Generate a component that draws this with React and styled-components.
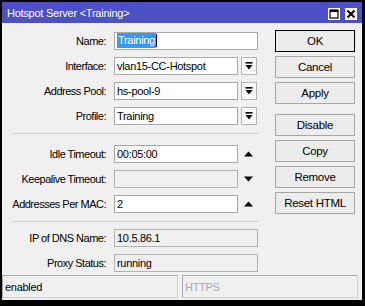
import React from 'react';
import styled, { createGlobalStyle } from 'styled-components';

const Global = createGlobalStyle`
  html, body { margin: 0; padding: 0; background: #000; }
  body { font-family: "Liberation Sans", Arial, sans-serif; }
  * { box-sizing: border-box; }
`;

const Frame = styled.div`
  width: 365px;
  height: 306px;
  background: #000;
  padding: 2px 3px 6px 2px;
`;

const Window = styled.div`
  height: 100%;
  background: #f0f0f0;
  display: flex;
  flex-direction: column;
`;

const TitleBar = styled.div`
  height: 21px;
  flex: none;
  background: #4b50c5;
  display: flex;
  align-items: center;
  padding: 0 5px 0 5px;
  color: #fff;
  font-size: 11px;
  letter-spacing: -0.25px;
`;

const Title = styled.div`
  flex: 1;
  padding-top: 1px;
`;

const TitleButtons = styled.div`
  display: flex;
  gap: 5px;
  margin-top: 3px;
`;

const TitleButton = styled.div`
  width: 12px;
  height: 12px;
  background: #fff;
  display: flex;
  align-items: center;
  justify-content: center;
`;

const Body = styled.div`
  flex: 1;
  display: flex;
  padding-top: 5px;
`;

const Form = styled.div`
  width: 256px;
  display: flex;
  flex-direction: column;
`;

const Row = styled.div`
  height: 25px;
  display: grid;
  grid-template-columns: 104px 1fr;
  column-gap: 8px;
  align-items: center;
`;

const Label = styled.div`
  text-align: right;
  font-size: 11px;
  letter-spacing: -0.5px;
  color: #000;
  white-space: nowrap;
`;

const Field = styled.div`
  display: flex;
  align-items: center;
  height: 18px;
`;

const Input = styled.div`
  height: 18px;
  width: ${p => (p.$short ? '124px' : '144px')};
  border: 1px solid ${p => (p.$readonly ? '#b2b2b2' : '#a9a9a9')};
  background: ${p => (p.$readonly ? '#f0f0f0' : '#fff')};
  font-size: 11px;
  letter-spacing: -0.3px;
  padding-left: 2px;
  display: flex;
  align-items: center;
  color: #000;
  white-space: nowrap;
  overflow: hidden;
`;

const Selected = styled.span`
  background: #3399ff;
  color: #fff;
  padding: 1px 1px 2px 1px;
`;

const Caret = styled.span`
  display: inline-block;
  width: 1px;
  height: 13px;
  background: #000;
`;

const DropButton = styled.div`
  width: 16px;
  height: 18px;
  margin-left: 3px;
  border: 1px solid #b4b4b4;
  background: #fbfbfb;
  display: flex;
  align-items: center;
  justify-content: center;
`;

const Spin = styled.div`
  width: 20px;
  height: 18px;
  display: flex;
  align-items: center;
  justify-content: center;
`;

const Separator = styled.div`
  height: ${p => p.$h}px;
  padding-top: ${p => p.$top}px;
  padding-left: 10px;
`;

const Line = styled.div`
  height: 1px;
  background: #d2d2d2;
`;

const Buttons = styled.div`
  margin-left: 17px;
  padding-top: 2px;
  width: 80px;
  display: flex;
  flex-direction: column;
  gap: 4px;
`;

const Button = styled.div`
  height: 22px;
  border: 1px solid ${p => (p.$default ? '#000' : '#a6a6a6')};
  background: #ececec;
  display: flex;
  align-items: center;
  justify-content: center;
  font-size: 11.5px;
  letter-spacing: -0.3px;
  color: #000;
  margin-top: ${p => (p.$gap ? '6px' : '0')};
`;

const StatusBar = styled.div`
  height: 23px;
  flex: none;
  margin-bottom: 2px;
  display: flex;
  gap: 4px;
  padding-right: 4px;
`;

const StatusCell = styled.div`
  width: ${p => (p.$grow ? 'auto' : '176px')};
  flex: ${p => (p.$grow ? '1' : 'none')};
  border: 1px solid #cfcfcf;
  border-top-color: #a8a8a8;
  border-left-color: #a8a8a8;
  display: flex;
  align-items: center;
  padding-left: 2px;
  font-size: 11px;
  letter-spacing: -0.3px;
  color: ${p => (p.$muted ? '#a9a9a9' : '#000')};
`;

const DropIcon = () => (
  <svg width="8" height="8" viewBox="0 0 8 8">
    <rect x="0.5" y="0" width="7" height="1.6" fill="#000" />
    <polygon points="0.5,3 7.5,3 4,7.5" fill="#000" />
  </svg>
);

const Tri = ({ down }) => (
  <svg width="9" height="6" viewBox="0 0 9 6">
    {down ? (
      <polygon points="0,0.5 9,0.5 4.5,5.5" fill="#000" />
    ) : (
      <polygon points="0,5.5 9,5.5 4.5,0.5" fill="#000" />
    )}
  </svg>
);

const MaxIcon = () => (
  <svg width="10" height="10" viewBox="0 0 10 10">
    <rect x="1" y="1" width="8" height="8" fill="none" stroke="#000" strokeWidth="1.2" />
    <rect x="1" y="1" width="8" height="2" fill="#000" />
  </svg>
);

const CloseIcon = () => (
  <svg width="10" height="10" viewBox="0 0 10 10">
    <path d="M1.5 1.5 L8.5 8.5 M8.5 1.5 L1.5 8.5" stroke="#000" strokeWidth="2" />
  </svg>
);

export default function App() {
  return (
    <>
      <Global />
      <Frame>
        <Window>
          <TitleBar>
            <Title>Hotspot Server &lt;Training&gt;</Title>
            <TitleButtons>
              <TitleButton><MaxIcon /></TitleButton>
              <TitleButton><CloseIcon /></TitleButton>
            </TitleButtons>
          </TitleBar>
          <Body>
            <Form>
              <Row>
                <Label>Name:</Label>
                <Field>
                  <Input><Selected>Training</Selected><Caret /></Input>
                </Field>
              </Row>
              <Row>
                <Label>Interface:</Label>
                <Field>
                  <Input $short>vlan15-CC-Hotspot</Input>
                  <DropButton><DropIcon /></DropButton>
                </Field>
              </Row>
              <Row>
                <Label>Address Pool:</Label>
                <Field>
                  <Input $short>hs-pool-9</Input>
                  <DropButton><DropIcon /></DropButton>
                </Field>
              </Row>
              <Row>
                <Label>Profile:</Label>
                <Field>
                  <Input $short>Training</Input>
                  <DropButton><DropIcon /></DropButton>
                </Field>
              </Row>
              <Separator $h={13} $top={5}><Line /></Separator>
              <Row>
                <Label>Idle Timeout:</Label>
                <Field>
                  <Input $short>00:05:00</Input>
                  <Spin><Tri /></Spin>
                </Field>
              </Row>
              <Row>
                <Label>Keepalive Timeout:</Label>
                <Field>
                  <Input $short $readonly></Input>
                  <Spin><Tri down /></Spin>
                </Field>
              </Row>
              <Row>
                <Label>Addresses Per MAC:</Label>
                <Field>
                  <Input $short>2</Input>
                  <Spin><Tri /></Spin>
                </Field>
              </Row>
              <Separator $h={9} $top={5}><Line /></Separator>
              <Row>
                <Label>IP of DNS Name:</Label>
                <Field>
                  <Input $readonly>10.5.86.1</Input>
                </Field>
              </Row>
              <Row>
                <Label>Proxy Status:</Label>
                <Field>
                  <Input $readonly>running</Input>
                </Field>
              </Row>
            </Form>
            <Buttons>
              <Button $default>OK</Button>
              <Button>Cancel</Button>
              <Button>Apply</Button>
              <Button $gap>Disable</Button>
              <Button>Copy</Button>
              <Button>Remove</Button>
              <Button>Reset HTML</Button>
            </Buttons>
          </Body>
          <StatusBar>
            <StatusCell>enabled</StatusCell>
            <StatusCell $grow $muted>HTTPS</StatusCell>
          </StatusBar>
        </Window>
      </Frame>
    </>
  );
}
